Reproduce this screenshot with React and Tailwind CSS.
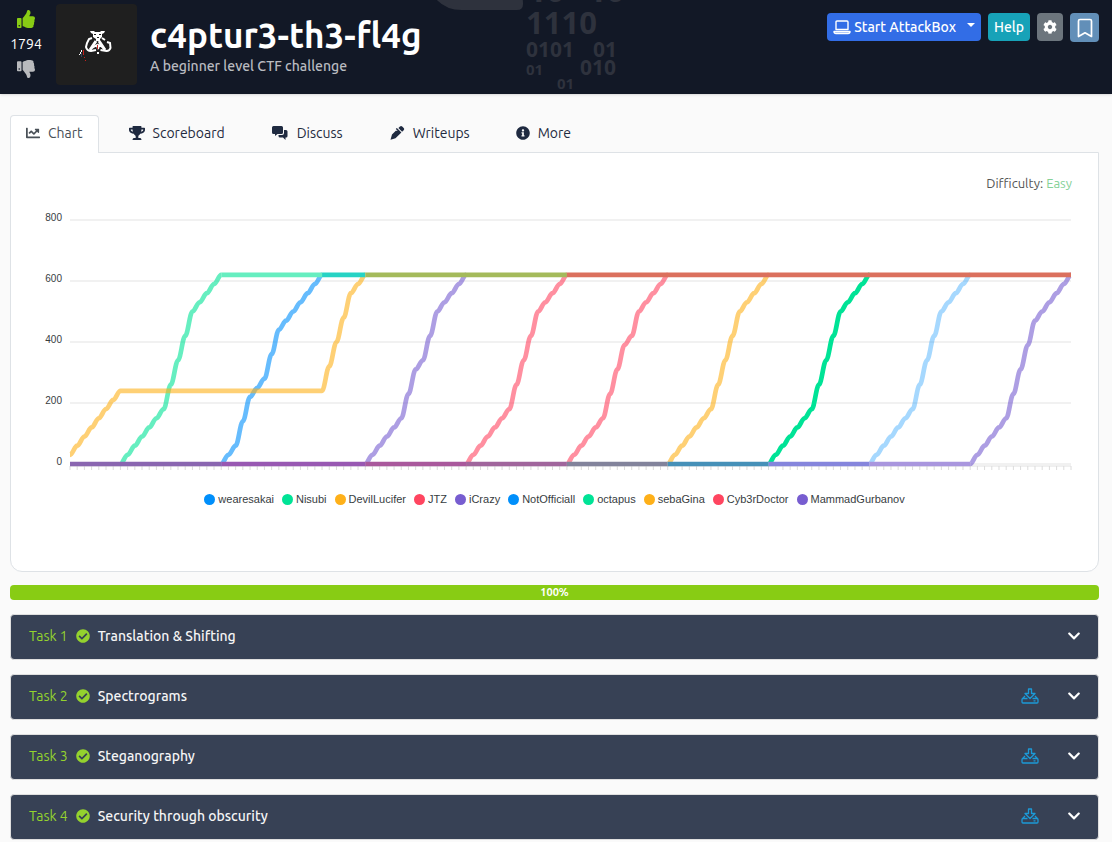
import React, { useState } from 'react';
import {
  FaThumbsUp,
  FaThumbsDown,
  FaChartLine,
  FaTrophy,
  FaInfoCircle,
  FaCog,
  FaCheckCircle,
  FaChevronDown,
} from 'react-icons/fa';

const BLUE = '#008FFB';
const GREEN = '#00E396';
const YELLOW = '#FEB019';
const RED = '#FF4560';
const PURPLE = '#775DD0';

const users = [
  { name: 'wearesakai', color: BLUE },
  { name: 'Nisubi', color: GREEN },
  { name: 'DevilLucifer', color: YELLOW },
  { name: 'JTZ', color: RED },
  { name: 'iCrazy', color: PURPLE },
  { name: 'NotOfficiall', color: BLUE },
  { name: 'octapus', color: GREEN },
  { name: 'sebaGina', color: YELLOW },
  { name: 'Cyb3rDoctor', color: RED },
  { name: 'MammadGurbanov', color: PURPLE },
];

// points gained on each question, per player
const regular = [30, 30, 30, 30, 30, 30, 80, 80, 80, 80, 30, 30, 30, 30];

const climbs = [
  { start: 7, from: 0, color: GREEN, opacity: 0.6, steps: regular },
  { start: 21, from: 0, color: BLUE, opacity: 0.6, steps: [30, 30, 80, 80, 30, 30, 80, 80, 30, 30, 30, 30, 30, 30] },
  { start: 0, from: 30, color: YELLOW, opacity: 0.6, steps: [30, 30, 30, 30, 30, 30, 30, ...Array(28).fill(0), 80, 80, 80, 80, 30, 30] },
  { start: 41, from: 0, color: PURPLE, opacity: 0.6, steps: [30, 30, 30, 30, 30, 80, 80, 30, 80, 80, 30, 30, 30, 30] },
  { start: 55, from: 0, color: RED, opacity: 0.6, steps: regular },
  { start: 69, from: 0, color: RED, opacity: 0.6, steps: [30, 30, 30, 30, 30, 80, 80, 80, 30, 80, 30, 30, 30, 30] },
  { start: 83, from: 0, color: YELLOW, opacity: 0.6, steps: regular },
  { start: 97, from: 0, color: GREEN, opacity: 1, steps: regular },
  { start: 111, from: 0, color: BLUE, opacity: 0.35, steps: regular },
  { start: 125, from: 0, color: PURPLE, opacity: 0.6, steps: [30, 30, 30, 30, 30, 80, 80, 80, 80, 30, 30, 30, 30, 30] },
];

// stretches where several players share the same score
const shared = [
  { from: 0, to: 21, score: 0, color: '#8A66B0' },
  { from: 21, to: 41, score: 0, color: '#9858B2' },
  { from: 41, to: 55, score: 0, color: '#A9589C' },
  { from: 55, to: 69, score: 0, color: '#A0659C' },
  { from: 69, to: 83, score: 0, color: '#82839B' },
  { from: 83, to: 97, score: 0, color: '#4590B8' },
  { from: 97, to: 111, score: 0, color: '#8585DC' },
  { from: 111, to: 125, score: 0, color: '#A996DE' },
  { from: 21, to: 35, score: 620, color: '#66EEC0' },
  { from: 35, to: 41, score: 620, color: '#27D3C4' },
  { from: 41, to: 69, score: 620, color: '#A4BA5B' },
  { from: 69, to: 139, score: 620, color: '#DB705D' },
];

const LEFT = 44;
const WIDTH = 1001;
const LAST = 139;
const xAt = (i) => LEFT + (i * WIDTH) / LAST;
const yAt = (score) => 260 - score * 0.305;

const climbPath = ({ start, from, steps }) => {
  let score = from;
  let x = xAt(start);
  let d = `M${x} ${yAt(score)}`;
  steps.forEach((step, i) => {
    const nextX = xAt(start + i + 1);
    const bend = (nextX - x) * 0.35;
    d += ` C${x + bend} ${yAt(score)} ${nextX - bend} ${yAt(score + step)} ${nextX} ${yAt(score + step)}`;
    score += step;
    x = nextX;
  });
  return d;
};

const ScoreChart = () => (
  <svg viewBox="0 0 1057 272" className="block w-full" role="img" aria-label="Score chart">
    {[0, 200, 400, 600, 800].map((score) => (
      <g key={score}>
        <line x1={LEFT} x2={LEFT + WIDTH} y1={yAt(score)} y2={yAt(score)} stroke="#f1f1f1" strokeWidth="2" />
        <text x="36" y={yAt(score) + 1} textAnchor="end" fill="#373d3f" className="font-['Liberation_Sans'] text-[10px]">
          {score}
        </text>
      </g>
    ))}
    <line x1={LEFT} x2={LEFT + WIDTH} y1="262" y2="262" stroke="#e0e0e0" />
    {Array.from({ length: LAST + 1 }, (_, i) => (
      <line key={i} x1={xAt(i)} x2={xAt(i)} y1="262" y2="266" stroke="#dcdcdc" />
    ))}
    {climbs.map((c) => (
      <path key={c.start} d={climbPath(c)} fill="none" stroke={c.color} strokeOpacity={c.opacity} strokeWidth="4.7" />
    ))}
    {shared.map((s) => (
      <line
        key={`${s.score}-${s.from}`}
        x1={xAt(s.from)}
        x2={xAt(s.to)}
        y1={yAt(s.score)}
        y2={yAt(s.score)}
        stroke={s.color}
        strokeWidth="4.7"
      />
    ))}
  </svg>
);

const Bubbles = () => (
  <svg viewBox="0 0 18 16" className="h-4 w-[18px]" fill="currentColor" aria-hidden="true">
    <path d="M2.500 1h8a1.500 1.500 0 0 1 1.500 1.500v5A1.500 1.500 0 0 1 10.500 9H6.500L4 11V9H2.500A1.500 1.500 0 0 1 1 7.500v-5A1.500 1.500 0 0 1 2.500 1z" />
    <path d="M13 5h2a1.500 1.500 0 0 1 1.500 1.500v4.500a1.500 1.500 0 0 1-1.500 1.500h-.5V15L12 12.500H9A1.500 1.500 0 0 1 7.500 11v-1H11a2 2 0 0 0 2-2z" />
  </svg>
);

const Pencil = () => (
  <svg viewBox="0 0 16 16" className="h-4 w-4" fill="currentColor" aria-hidden="true">
    <path d="M11 1.500a1.500 1.500 0 0 1 2.200 0l1.500 1.500a1.500 1.500 0 0 1 0 2.200l-1.600 1.600-3.700-3.700z" />
    <path d="M8.700 3.800 12.400 7.500 6.500 13.300 1.500 14.800 3 9.600l3.800-3.900 1.900 0L6.800 3.900 7.700 3z" />
  </svg>
);

const Laptop = () => (
  <svg viewBox="0 0 18 16" className="h-4 w-[18px]" fill="none" stroke="currentColor" strokeWidth="1.400" strokeLinejoin="round" aria-hidden="true">
    <path d="M3 10.500V3q0-1 1-1h10q1 0 1 1v7.500z" />
    <path d="M1 12.500h16q0 2-2 2H3q-2 0-2-2z" fill="currentColor" fillOpacity="0.3" />
  </svg>
);

const Bookmark = () => (
  <svg viewBox="0 0 16 20" className="h-5 w-4" fill="none" stroke="currentColor" strokeWidth="1.700" strokeLinejoin="round" aria-hidden="true">
    <path d="M1.500 18.500V3q0-1.500 1.500-1.500h10q1.500 0 1.500 1.500v15.500L8 14.800z" />
  </svg>
);

const DownloadTray = () => (
  <svg viewBox="0 0 18 16" className="h-4 w-[18px]" fill="none" stroke="currentColor" strokeWidth="1.300" strokeLinejoin="round" aria-hidden="true">
    <path d="M7.500 1h3v4.500h3.500l-5 5-5-5h3.500z" />
    <path d="M4 8 1.500 10.800M14 8l2.500 2.800" />
    <path d="M6.500 10.500H2q-1 0-1 1V14q0 1 1 1h14q1 0 1-1v-2.500q0-1-1-1h-4.500M12.500 12.800h2" />
  </svg>
);

const Skull = () => (
  <svg viewBox="0 0 81 81" className="h-full w-full" aria-label="Room logo">
    <path d="M34 27h4l1 1h5l1-1h4l-1 2-2 1v3l-2 2v2h-4v-2l-3-2v-3l-2-1z" fill="#fff" />
    <g fill="none" stroke="#fff">
      <path d="M36 34l-3 1-2 4-1 4q1 4 5 4l5-1" strokeWidth="2" />
      <path d="M46 34l3 2M51 38l3 1 .500 5q-1 3-4 3l-6-1" strokeWidth="2" />
      <path d="M40 37l-6 9M43 37l6 9" strokeWidth="3" />
      <path d="M36 44l5-3 1 4 1-4 5 3" strokeWidth="2" />
    </g>
    <g fill="#fff">
      <rect x="41" y="48" width="2" height="2" />
      <path d="M25 46h1v2h-1zM24 48h1v2h-1zM23 50h1v1h-1z" />
    </g>
    <g fill="#1f1f1f">
      <path d="M38 30h2v1h-2zM43 30h2v1h-2zM41 33h2v1h-2z" />
    </g>
    <path d="M41 41h1v4h-1zM27 46h1v5h-1zM28 53h1v1h-1zM29 56h1v1h-1z" fill="#c5221c" />
    <path d="M25 49h1v4h-1z" fill="#31435e" />
  </svg>
);

const HeaderArt = () => (
  <svg viewBox="0 0 200 94" className="h-full w-[200px]" aria-hidden="true" fill="#2e323d">
    <path d="M0-10h85q8 0 8 14 0 6-6 6H32Q10 10 0-10z" />
    <g className="font-['Noto_Sans'] font-bold">
      <text x="98" y="2" fontSize="32">10</text>
      <text x="158" y="2" fontSize="32">10</text>
      <text x="96" y="34" fontSize="31">1110</text>
      <text x="96" y="57" fontSize="21">0101</text>
      <text x="163" y="57" fontSize="21">01</text>
      <text x="96" y="75" fontSize="15">01</text>
      <text x="150" y="75" fontSize="21">010</text>
      <text x="127" y="89" fontSize="15">01</text>
    </g>
  </svg>
);

const tabs = [
  { name: 'Chart', icon: <FaChartLine className="size-[14px]" /> },
  { name: 'Scoreboard', icon: <FaTrophy className="size-4" /> },
  { name: 'Discuss', icon: <Bubbles /> },
  { name: 'Writeups', icon: <Pencil /> },
  { name: 'More', icon: <FaInfoCircle className="size-[14px]" /> },
];

const tasks = [
  { title: 'Translation & Shifting', download: false },
  { title: 'Spectrograms', download: true },
  { title: 'Steganography', download: true },
  { title: 'Security through obscurity', download: true },
];

const Header = () => (
  <header className="relative h-[94px] bg-[#121826] text-white shadow-sm">
    <div className="absolute inset-y-0 left-[430px] overflow-hidden">
      <HeaderArt />
    </div>
    <div className="relative flex items-start pr-[13px]">
      <div className="flex w-[52px] flex-col items-center gap-2 pt-[10px]">
        <button aria-label="Upvote" className="text-[#88cc14]">
          <FaThumbsUp className="size-[18px]" />
        </button>
        <span className="text-[14px] leading-4">1794</span>
        <button aria-label="Downvote" className="text-[#b9babd]">
          <FaThumbsDown className="size-[18px]" />
        </button>
      </div>
      <div className="ml-1 mt-1 size-[81px] rounded bg-[#1f1f1f]">
        <Skull />
      </div>
      <div className="ml-[13px] pt-3">
        <h1 className="text-[35px] font-bold leading-[46px]">c4ptur3-th3-fl4g</h1>
        <p className="text-[14px] font-medium leading-4 text-[#b9bbc0]">A beginner level CTF challenge</p>
      </div>
      <div className="ml-auto flex items-start gap-[7px] pt-[13px] text-[14px] font-medium">
        <button className="flex h-7 items-center gap-[3px] rounded bg-[#326de6] px-[6px]">
          <Laptop />
          Start AttackBox
          <span className="mb-1 ml-2 border-x-4 border-t-4 border-x-transparent border-t-white" />
        </button>
        <button className="h-7 rounded bg-[#17a2b8] px-[6px]">Help</button>
        <button aria-label="Settings" className="flex h-7 w-[26px] items-center justify-center rounded bg-[#6c757d]">
          <FaCog className="size-[14px]" />
        </button>
        <button aria-label="Bookmark" className="flex h-[29px] w-[29px] items-center justify-center rounded bg-[#628fb8]">
          <Bookmark />
        </button>
      </div>
    </div>
  </header>
);

const App = () => {
  const [active, setActive] = useState('Chart');

  return (
    <div className="min-h-screen bg-[#fafafa] font-['Ubuntu','Noto_Sans',sans-serif]">
      <Header />

      <main className="pb-1 pl-[10px] pr-[13px] pt-[21px]">
        <nav className="flex items-start">
          {tabs.map((tab) => (
            <button
              key={tab.name}
              onClick={() => setActive(tab.name)}
              className={`relative mr-[14px] flex items-center gap-2 rounded-t border border-b-0 px-[15px] text-[14px] ${
                active === tab.name
                  ? 'z-10 -mb-px h-[38px] border-[#dee2e6] bg-white pb-[3px] text-[#495057]'
                  : 'h-[37px] border-transparent pb-[2px] text-[#1f2a40]'
              }`}
            >
              {tab.icon}
              {tab.name}
            </button>
          ))}
        </nav>

        <section className="h-[420px] rounded-b-xl border border-[#dee2e6] bg-white px-[15px] pt-[22px]">
          <p className="pr-[11px] text-right text-[13px] leading-4 text-[#555]">
            Difficulty: <span className="text-[#86d197]">Easy</span>
          </p>
          <div className="pt-[13px]">
            <ScoreChart />
          </div>
          <ul className="flex justify-center gap-2 pt-[15px] font-['Liberation_Sans'] text-[11px] leading-4 text-[#373d3f]">
            {users.map((user) => (
              <li key={user.name} className="flex items-center gap-[3px]">
                <span className="size-[11px] rounded-full" style={{ backgroundColor: user.color }} />
                {user.name}
              </li>
            ))}
          </ul>
        </section>

        <div className="mt-[13px] h-[15px] rounded bg-[#88cc14] text-center text-[11px] font-bold leading-[15px] text-white">
          100%
        </div>

        <div className="mt-[14px] flex flex-col gap-[14px]">
          {tasks.map((task, i) => (
            <button
              key={task.title}
              className="flex h-[46px] items-center rounded-sm border border-[#dfdfdf] bg-[#374155] pb-[2px] pl-[18px] pr-[17px] text-left text-[14px]"
            >
              <span className="text-[#94d22e]">Task {i + 1}</span>
              <FaCheckCircle className="mx-2 size-[14px] text-[#94d22e]" />
              <span className="font-medium text-[#f5f5f5]">{task.title}</span>
              <span className="ml-auto flex items-center gap-7 text-[#1c99d6]">
                {task.download && <DownloadTray />}
                <FaChevronDown className="size-[14px] text-white" />
              </span>
            </button>
          ))}
        </div>
      </main>
    </div>
  );
};

export default App;
